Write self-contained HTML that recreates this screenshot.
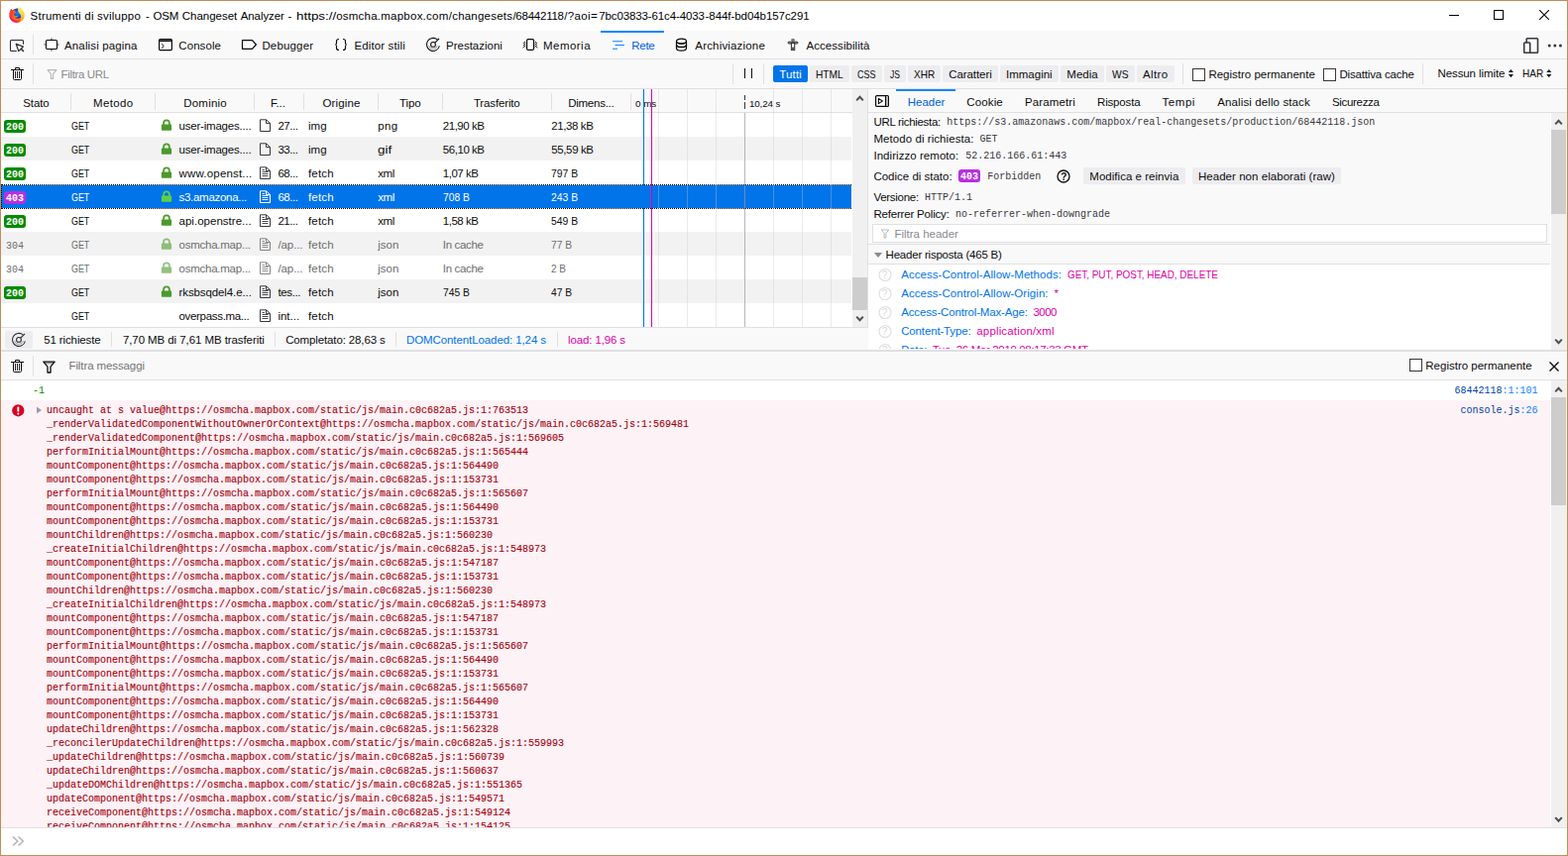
<!DOCTYPE html>
<html lang="it"><head><meta charset="utf-8"><title>Strumenti di sviluppo - OSM Changeset Analyzer</title>
<style>
html,body{margin:0;padding:0;background:#fff;}
body{width:1582px;height:864px;overflow:hidden;}
#win{position:relative;width:1582px;height:864px;overflow:hidden;background:#fff;font:11.5px/16px "Liberation Sans",sans-serif;color:#0c0c0d;}
.b{position:absolute;display:block;}
.t{position:absolute;white-space:pre;line-height:16px;transform-origin:0 50%;}
.m{font-family:"Liberation Mono",monospace;font-size:10px;}
.bd{background:#e0e0e2;}
.con{position:absolute;white-space:pre;font:10px/14px "Liberation Mono",monospace;margin:0;}

</style></head>
<body>
<div id="win">
<div class="b" style="left:0px;top:0px;width:1582px;height:31px;background:#fff;"></div>
<svg class="b" style="left:9px;top:7px;" width="16" height="16" viewBox="0 0 16 16">
<defs>
<linearGradient id="fa" x1="0.1" y1="0.9" x2="0.9" y2="0.1"><stop offset="0" stop-color="#d6139a"/><stop offset="0.22" stop-color="#ff2a3c"/><stop offset="0.5" stop-color="#ff7a1a"/><stop offset="0.78" stop-color="#ffc928"/><stop offset="1" stop-color="#fff45a"/></linearGradient>
<radialGradient id="fb" cx="0.55" cy="0.5" r="0.55"><stop offset="0" stop-color="#0a8cff"/><stop offset="0.55" stop-color="#0a58e8"/><stop offset="1" stop-color="#2a1fb8"/></radialGradient>
<linearGradient id="fc" x1="0.3" y1="0" x2="0.6" y2="1"><stop offset="0" stop-color="#fff45a"/><stop offset="0.55" stop-color="#ffd52e"/><stop offset="1" stop-color="#ff9a12"/></linearGradient>
<linearGradient id="fd" x1="0" y1="0.2" x2="1" y2="0.6"><stop offset="0" stop-color="#ff2a3c"/><stop offset="0.6" stop-color="#ff6a14"/><stop offset="1" stop-color="#ff9a12"/></linearGradient>
</defs>
<path d="M2.3 2C3 2.9 3.6 3.2 4.4 3.3C6 1.6 9 1.2 10.2 1.9C10.1 1.2 10.3 0.5 10.6 0.1C11.3 1.3 12.8 2 13.9 3.6C15.4 5.6 15.9 8.2 15.2 10.6C14.2 13.8 11.4 15.9 8 15.9C3.7 15.9 0.3 12.6 0.3 8.4C0.3 6 1 3.6 2.3 2Z" fill="url(#fa)"/>
<circle cx="8.2" cy="6.7" r="5.3" fill="url(#fb)"/>
<path d="M2.3 2C3 2.9 3.6 3.2 4.4 3.3C5 3.4 5.8 3.3 6.3 3.5C6.1 4.3 6.4 4.9 7.9 5.4C7.4 6 6.6 6.1 5.9 6.2C5.3 7 5.2 8.2 5.6 8.8C6.4 9.4 7.8 8.7 9.1 9C8.9 10 7.5 10.9 6 11C7 11.9 8.6 12.2 10.4 11.4C9.5 13 7.5 13.6 5.6 13C3.2 12.2 1.4 10.4 1.1 8C0.9 5.8 1.3 3.6 2.3 2Z" fill="url(#fd)"/>
<path d="M10.6 0.1C11.3 1.3 12.8 2 13.9 3.6C15.4 5.6 15.9 8.2 15.2 10.6C14.4 13.1 12.5 14.9 10.2 15.6C11.8 14.2 12.6 12.4 12.4 10.4C12.3 8.8 11.6 7.6 10.7 6.6C9.6 5.4 9 4.2 9.2 2.8C9.3 2.1 9.7 1.1 10.6 0.1Z" fill="url(#fc)"/>
</svg>
<span class="t" style="left:30.6px;top:8.01px;color:#000;letter-spacing:0.226px;">Strumenti di sviluppo</span>
<span class="t" style="left:147px;top:8.01px;color:#000;">-</span>
<span class="t" style="left:154.5px;top:8.01px;color:#000;letter-spacing:-0.168px;">OSM</span>
<span class="t" style="left:183.7px;top:8.01px;color:#000;">Changeset</span>
<span class="t" style="left:242.7px;top:8.01px;color:#000;letter-spacing:-0.069px;">Analyzer</span>
<span class="t" style="left:290.5px;top:8.01px;color:#000;letter-spacing:-0.444px;">-</span>
<span class="t" style="left:298.5px;top:8.01px;color:#000;transform:scaleX(1.1642);">https://</span>
<span class="t" style="left:339.2px;top:8.01px;color:#000;letter-spacing:0.235px;">osmcha.mapbox.com</span>
<span class="t" style="left:452.8px;top:8.01px;color:#000;letter-spacing:0.208px;">/changesets</span>
<span class="t" style="left:517.4px;top:8.01px;color:#000;letter-spacing:-0.235px;">/68442118</span>
<span class="t" style="left:569.2px;top:8.01px;color:#000;letter-spacing:0.357px;">/?aoi=</span>
<span class="t" style="left:604.2px;top:8.01px;color:#000;letter-spacing:-0.117px;">7bc03833-61c4-4033</span>
<span class="t" style="left:711.6px;top:8.01px;color:#000;letter-spacing:-0.064px;">-844f-bd04b157c291</span>
<div class="b" style="left:1462px;top:15px;width:10px;height:1px;background:#000;"></div>
<div class="b" style="left:1507px;top:10px;width:10px;height:10px;border:1px solid #000;box-sizing:border-box;"></div>
<svg class="b" style="left:1553px;top:10px;" width="10" height="10" viewBox="0 0 10 10"><path d="M0 0L10 10M10 0L0 10" stroke="#000" stroke-width="1.1" fill="none"/></svg>
<div class="b" style="left:0px;top:31px;width:1582px;height:28px;background:#f9f9fa;"></div>
<div class="b" style="left:0px;top:59px;width:1582px;height:1px;background:#e0e0e2;"></div>
<svg class="b" style="left:9px;top:39px;" width="17" height="15" viewBox="0 0 17 15"><path d="M14.5 5.7V2.5Q14.5 1.5 13.5 1.5H2.5Q1.5 1.5 1.5 2.5V11.5Q1.5 12.5 2.5 12.5H7.8" fill="none" stroke="#2a2a2e" stroke-width="1.05"/><path d="M7.2 5.2L14.4 8.1L9.8 12.6Z" fill="none" stroke="#2a2a2e" stroke-width="1.2" stroke-linejoin="round"/><path d="M12.3 10.2L14.9 12.9" stroke="#2a2a2e" stroke-width="1.5"/></svg>
<div class="b" style="left:33px;top:35px;width:1px;height:20px;background:#e0e0e2;"></div>
<svg class="b" style="left:44px;top:38px;" width="16" height="14" viewBox="0 0 16 14"><rect x="2.5" y="2.5" width="11" height="9" rx="1" fill="#fff" stroke="#0c0c0d" stroke-width="1.05"/><path d="M8 0.6V2M8 12V13.4M0.4 7H2M14 7H15.6" stroke="#0c0c0d" stroke-width="1.2" opacity="0.75"/></svg>
<span class="t" style="left:65px;top:38.01px;letter-spacing:0.142px;">Analisi pagina</span>
<svg class="b" style="left:159px;top:38px;" width="16" height="14" viewBox="0 0 16 14"><rect x="1.6" y="1.6" width="12.8" height="11" rx="1" fill="none" stroke="#0c0c0d" stroke-width="1.2"/><path d="M1.6 3.2H14.4" stroke="#0c0c0d" stroke-width="1.6"/><path d="M4 6.3L6.3 8.5L4 10.7" fill="none" stroke="#0c0c0d" stroke-width="1"/></svg>
<span class="t" style="left:180.3px;top:38.01px;letter-spacing:0.071px;">Console</span>
<svg class="b" style="left:243px;top:39px;" width="17" height="12" viewBox="0 0 17 12"><path d="M1.5 1.6H11.5L15.4 6L11.5 10.4H1.5Z" fill="none" stroke="#0c0c0d" stroke-width="1.2" stroke-linejoin="round"/></svg>
<span class="t" style="left:264.4px;top:38.01px;letter-spacing:0.161px;">Debugger</span>
<svg class="b" style="left:337px;top:38px;" width="14" height="14" viewBox="0 0 14 14"><path d="M5 1.5Q2.5 1.5 2.5 3.5V5.5Q2.5 7 1.2 7Q2.5 7 2.5 8.5V10.5Q2.5 12.5 5 12.5M9 1.5Q11.5 1.5 11.5 3.5V5.5Q11.5 7 12.8 7Q11.5 7 11.5 8.5V10.5Q11.5 12.5 9 12.5" fill="none" stroke="#0c0c0d" stroke-width="1.15"/></svg>
<span class="t" style="left:357.4px;top:38.01px;letter-spacing:0.137px;">Editor stili</span>
<svg class="b" style="left:429px;top:37px;" width="16" height="16" viewBox="0 0 16 16"><path d="M12.18 2.92A6.5 6.5 0 1 0 14.36 9.25" fill="none" stroke="#0c0c0d" stroke-width="1.05"/><circle cx="8" cy="7.9" r="2.4" fill="none" stroke="#0c0c0d" stroke-width="1.05"/><path d="M9.7 6.2L14 2" stroke="#0c0c0d" stroke-width="1.05"/><path d="M12.35 9.06A4.5 4.5 0 0 1 3.65 9.06" fill="none" stroke="#0c0c0d" stroke-width="0.7" opacity="0.55"/></svg>
<span class="t" style="left:450px;top:38.01px;">Prestazioni</span>
<svg class="b" style="left:526px;top:38px;" width="18" height="14" viewBox="0 0 18 14"><rect x="5.6" y="1.6" width="6.9" height="10.8" rx="1.2" fill="#fff" stroke="#0c0c0d" stroke-width="1.2"/><rect x="3" y="4" width="1" height="1" fill="#0c0c0d" opacity="1"/><rect x="3" y="6" width="1" height="1" fill="#0c0c0d" opacity="1"/><rect x="3" y="8" width="1" height="1" fill="#0c0c0d" opacity="1"/><rect x="2" y="5" width="1" height="1" fill="#0c0c0d" opacity="0.9"/><rect x="2" y="7" width="1" height="1" fill="#0c0c0d" opacity="0.9"/><rect x="2" y="9" width="1" height="1" fill="#0c0c0d" opacity="0.9"/><rect x="4" y="5" width="1" height="1" fill="#0c0c0d" opacity="0.35"/><rect x="4" y="7" width="1" height="1" fill="#0c0c0d" opacity="0.35"/><rect x="4" y="9" width="1" height="1" fill="#0c0c0d" opacity="0.35"/><rect x="1" y="10" width="1" height="1" fill="#0c0c0d" opacity="0.3"/><rect x="14" y="4" width="1" height="1" fill="#0c0c0d" opacity="1"/><rect x="14" y="6" width="1" height="1" fill="#0c0c0d" opacity="1"/><rect x="14" y="8" width="1" height="1" fill="#0c0c0d" opacity="1"/><rect x="15" y="5" width="1" height="1" fill="#0c0c0d" opacity="0.9"/><rect x="15" y="7" width="1" height="1" fill="#0c0c0d" opacity="0.9"/><rect x="15" y="9" width="1" height="1" fill="#0c0c0d" opacity="0.9"/><rect x="13" y="5" width="1" height="1" fill="#0c0c0d" opacity="0.35"/><rect x="13" y="7" width="1" height="1" fill="#0c0c0d" opacity="0.35"/><rect x="13" y="9" width="1" height="1" fill="#0c0c0d" opacity="0.35"/><rect x="16" y="10" width="1" height="1" fill="#0c0c0d" opacity="0.3"/></svg>
<span class="t" style="left:548px;top:38.01px;letter-spacing:0.467px;">Memoria</span>
<div class="b" style="left:606px;top:31px;width:64px;height:2px;background:#0a84ff;"></div>
<svg class="b" style="left:617px;top:40px;" width="15" height="11" viewBox="0 0 15 11"><path d="M1 1.8H11M3.5 5.5H13M1 9.2H6" stroke="#0a84ff" stroke-width="1.1"/></svg>
<span class="t" style="left:637.3px;top:38.01px;color:#0060df;letter-spacing:-0.299px;">Rete</span>
<svg class="b" style="left:681px;top:38px;" width="14" height="15" viewBox="0 0 14 15"><ellipse cx="6.5" cy="3.5" rx="5" ry="2.3" fill="#fff" stroke="#0c0c0d" stroke-width="1.2"/><path d="M1.5 3.5V10.6C1.5 12 3.7 13.2 6.5 13.2S11.5 12 11.5 10.6V3.5" fill="none" stroke="#0c0c0d" stroke-width="1.2"/><path d="M1.5 7C1.5 8.4 3.7 9.6 6.5 9.6S11.5 8.4 11.5 7" fill="none" stroke="#0c0c0d" stroke-width="1.5"/><path d="M2.2 5.2C3 6 4.6 6.5 6.5 6.5S10 6 10.8 5.2" fill="none" stroke="#0c0c0d" stroke-width="0.9"/></svg>
<span class="t" style="left:701.3px;top:38.01px;letter-spacing:0.176px;">Archiviazione</span>
<svg class="b" style="left:793px;top:38px;" width="14" height="14" viewBox="0 0 14 14"><rect x="5.2" y="1" width="3.7" height="2.9" rx="1.3" fill="#7a7a7d"/><rect x="2" y="4.2" width="10" height="1.8" rx="0.9" fill="#b1b1b3" stroke="#1a1a1c" stroke-width="0.9"/><rect x="5.4" y="5.6" width="3.3" height="7" fill="#fff" stroke="#2a2a2e" stroke-width="1"/><rect x="5.4" y="9.6" width="3.3" height="3" fill="#5a5a5e"/></svg>
<span class="t" style="left:813.4px;top:38.01px;letter-spacing:0.071px;">Accessibilità</span>
<svg class="b" style="left:1536px;top:37px;" width="17" height="18" viewBox="0 0 17 18"><rect x="4.2" y="1.7" width="11.3" height="14.6" rx="0.8" fill="#f9f9fa" stroke="#38383d" stroke-width="1.6"/><rect x="1.7" y="6" width="6" height="10.3" rx="0.8" fill="#f9f9fa" stroke="#38383d" stroke-width="1.6"/></svg>
<svg class="b" style="left:1561px;top:44px;" width="16" height="4" viewBox="0 0 16 4"><circle cx="2.2" cy="2" r="1.5" fill="#38383d"/><circle cx="7.8" cy="2" r="1.5" fill="#38383d"/><circle cx="13.4" cy="2" r="1.5" fill="#38383d"/></svg>
<div class="b" style="left:0px;top:60px;width:1582px;height:29px;background:#f9f9fa;"></div>
<div class="b" style="left:0px;top:89px;width:1582px;height:1px;background:#e0e0e2;"></div>
<svg class="b" style="left:11px;top:68px;" width="13" height="13" viewBox="0 0 13 13"><rect x="0" y="2" width="13" height="1" fill="#0c0c0d"/><path d="M4.5 2.5V0.5H8.5V2.5" fill="none" stroke="#0c0c0d" stroke-width="1"/><path d="M2.5 3V11.5Q2.5 12.5 3.5 12.5H9.5Q10.5 12.5 10.5 11.5V3" fill="none" stroke="#0c0c0d" stroke-width="1"/><path d="M4.5 4.4V10.6M6.5 4.4V10.6M8.5 4.4V10.6" stroke="#0c0c0d" stroke-width="0.9" stroke-linecap="round"/></svg>
<div class="b" style="left:33px;top:64px;width:1px;height:21px;background:#e0e0e2;"></div>
<svg class="b" style="left:47px;top:69px;" width="11" height="12" viewBox="0 0 11 12"><path d="M1 1.6H10L6.6 5.6V10.4H4.4V5.6Z" fill="none" stroke="#b8b8bb" stroke-width="1.1" stroke-linejoin="round"/></svg>
<span class="t" style="left:61.6px;top:67.01px;color:#8a8a90;letter-spacing:-0.357px;">Filtra URL</span>
<div class="b" style="left:739px;top:64px;width:1px;height:21px;background:#e0e0e2;"></div>
<div class="b" style="left:751px;top:69px;width:1.4px;height:10px;background:#0c0c0d;"></div>
<div class="b" style="left:758px;top:69px;width:1.4px;height:10px;background:#0c0c0d;"></div>
<div class="b" style="left:770px;top:64px;width:1px;height:21px;background:#e0e0e2;"></div>
<div class="b" style="left:780px;top:66px;width:35px;height:17px;background:#0074e8;border-radius:2px;"></div>
<span class="t" style="left:786.3px;top:67.01px;color:#fff;letter-spacing:0.149px;">Tutti</span>
<div class="b" style="left:817px;top:66px;width:40px;height:17px;background:#ededf0;border-radius:2px;"></div>
<span class="t" style="left:823px;top:67.01px;color:#0c0c0d;transform:scaleX(0.8878);">HTML</span>
<div class="b" style="left:859px;top:66px;width:31px;height:17px;background:#ededf0;border-radius:2px;"></div>
<span class="t" style="left:865.2px;top:67.01px;color:#0c0c0d;transform:scaleX(0.7820);">CSS</span>
<div class="b" style="left:892px;top:66px;width:22px;height:17px;background:#ededf0;border-radius:2px;"></div>
<span class="t" style="left:898px;top:67.01px;color:#0c0c0d;transform:scaleX(0.7451);">JS</span>
<div class="b" style="left:916px;top:66px;width:33px;height:17px;background:#ededf0;border-radius:2px;"></div>
<span class="t" style="left:921.8px;top:67.01px;color:#0c0c0d;transform:scaleX(0.8731);">XHR</span>
<div class="b" style="left:951px;top:66px;width:56px;height:17px;background:#ededf0;border-radius:2px;"></div>
<span class="t" style="left:957.2px;top:67.01px;color:#0c0c0d;letter-spacing:-0.068px;">Caratteri</span>
<div class="b" style="left:1009px;top:66px;width:59px;height:17px;background:#ededf0;border-radius:2px;"></div>
<span class="t" style="left:1015px;top:67.01px;color:#0c0c0d;">Immagini</span>
<div class="b" style="left:1070px;top:66px;width:44px;height:17px;background:#ededf0;border-radius:2px;"></div>
<span class="t" style="left:1076.3px;top:67.01px;color:#0c0c0d;">Media</span>
<div class="b" style="left:1116px;top:66px;width:29px;height:17px;background:#ededf0;border-radius:2px;"></div>
<span class="t" style="left:1122px;top:67.01px;color:#0c0c0d;transform:scaleX(0.8904);">WS</span>
<div class="b" style="left:1147px;top:66px;width:38px;height:17px;background:#ededf0;border-radius:2px;"></div>
<span class="t" style="left:1153px;top:67.01px;color:#0c0c0d;letter-spacing:0.369px;">Altro</span>
<div class="b" style="left:1193px;top:64px;width:1px;height:21px;background:#e0e0e2;"></div>
<div class="b" style="left:1203px;top:69px;width:13px;height:13px;background:#fff;border:1px solid #38383d;box-sizing:border-box;"></div>
<span class="t" style="left:1219.4px;top:67.01px;">Registro permanente</span>
<div class="b" style="left:1335px;top:69px;width:13px;height:13px;background:#fff;border:1px solid #38383d;box-sizing:border-box;"></div>
<span class="t" style="left:1351.4px;top:67.01px;letter-spacing:-0.172px;">Disattiva cache</span>
<div class="b" style="left:1435px;top:64px;width:1px;height:21px;background:#e0e0e2;"></div>
<span class="t" style="left:1450.5px;top:66.01px;letter-spacing:-0.095px;">Nessun limite</span>
<svg class="b" style="left:1521px;top:69px;" width="7" height="10" viewBox="0 0 7 10"><g transform="translate(0.6,0.5)"><path d="M0.2 3.6L2.8 0.4L5.4 3.6ZM0.2 5.6L2.8 8.8L5.4 5.6Z" fill="#1a1a1e"/></g></svg>
<span class="t" style="left:1535.5px;top:66.01px;transform:scaleX(0.8731);">HAR</span>
<svg class="b" style="left:1560px;top:69px;" width="7" height="10" viewBox="0 0 7 10"><g transform="translate(0,0.5)"><path d="M0.2 3.6L2.8 0.4L5.4 3.6ZM0.2 5.6L2.8 8.8L5.4 5.6Z" fill="#1a1a1e"/></g></svg>
<div class="b" style="left:0px;top:90px;width:876px;height:23px;background:#f9f9fa;"></div>
<div class="b" style="left:0px;top:113px;width:876px;height:1px;background:#e0e0e2;"></div>
<div class="b" style="left:71px;top:94px;width:1px;height:17px;background:#e0e0e2;"></div>
<div class="b" style="left:156px;top:94px;width:1px;height:17px;background:#e0e0e2;"></div>
<div class="b" style="left:256px;top:94px;width:1px;height:17px;background:#e0e0e2;"></div>
<div class="b" style="left:306px;top:94px;width:1px;height:17px;background:#e0e0e2;"></div>
<div class="b" style="left:381px;top:94px;width:1px;height:17px;background:#e0e0e2;"></div>
<div class="b" style="left:446px;top:94px;width:1px;height:17px;background:#e0e0e2;"></div>
<div class="b" style="left:556px;top:94px;width:1px;height:17px;background:#e0e0e2;"></div>
<div class="b" style="left:636px;top:94px;width:1px;height:17px;background:#e0e0e2;"></div>
<span class="t" style="left:23.3px;top:96.01px;letter-spacing:-0.112px;">Stato</span>
<span class="t" style="left:94px;top:96.01px;letter-spacing:0.357px;">Metodo</span>
<span class="t" style="left:185.3px;top:96.01px;letter-spacing:0.188px;">Dominio</span>
<span class="t" style="left:273px;top:96.01px;letter-spacing:-0.161px;">F...</span>
<span class="t" style="left:325.4px;top:96.01px;letter-spacing:0.160px;">Origine</span>
<span class="t" style="left:403px;top:96.01px;letter-spacing:-0.113px;">Tipo</span>
<span class="t" style="left:477.9px;top:96.01px;letter-spacing:-0.144px;">Trasferito</span>
<span class="t" style="left:573.2px;top:96.01px;letter-spacing:-0.253px;">Dimens...</span>
<span class="t" style="left:641px;top:96.6px;font-size:9.8px;">0 ms</span>
<span class="t" style="left:755.9px;top:96.6px;font-size:9.8px;letter-spacing:-0.120px;">10,24 s</span>
<div class="b" style="left:751px;top:96px;width:1px;height:5px;background:#38383d;"></div>
<div class="b" style="left:751px;top:103px;width:1px;height:7px;background:#38383d;"></div>
<div class="b" style="left:4px;top:121px;width:22px;height:13px;background:#058b00;border-radius:3px;"></div>
<span class="t m" style="left:6px;top:120.07px;color:#fff;font-size:11px;font-weight:bold;transform:scaleX(0.9085);">200</span>
<span class="t" style="left:71.7px;top:119.01px;color:#0c0c0d;transform:scaleX(0.7741);">GET</span>
<svg class="b" style="left:162px;top:120px;" width="12" height="13" viewBox="0 0 12 13"><g transform="translate(0.5,0)"><path d="M2.6 6V4.2A2.9 2.9 0 0 1 8.4 4.2V6" fill="none" stroke="#4c9a2a" stroke-width="1.7"/><rect x="0.4" y="5.6" width="10.2" height="6.2" rx="0.8" fill="#4c9a2a"/></g></svg>
<span class="t" style="left:180.5px;top:119.01px;color:#0c0c0d;letter-spacing:-0.204px;">user-images....</span>
<svg class="b" style="left:262px;top:120px;" width="11" height="13" viewBox="0 0 11 13"><path d="M0.5 0.8H6.6L10.5 4.5V12.5H0.5Z" fill="none" stroke="#38383d" stroke-width="1" stroke-linejoin="round"/><path d="M6.5 1V4.6H10.3" fill="none" stroke="#38383d" stroke-width="1"/></svg>
<span class="t" style="left:280.4px;top:119.01px;color:#0c0c0d;letter-spacing:-0.478px;">27...</span>
<span class="t" style="left:311px;top:119.01px;color:#0c0c0d;">img</span>
<span class="t" style="left:381.3px;top:119.01px;color:#0c0c0d;letter-spacing:0.371px;">png</span>
<span class="t" style="left:446.8px;top:119.01px;color:#0c0c0d;letter-spacing:-0.476px;">21,90 kB</span>
<span class="t" style="left:556.3px;top:119.01px;color:#0c0c0d;letter-spacing:-0.413px;">21,38 kB</span>
<div class="b" style="left:1px;top:138px;width:858px;height:24px;background:#f2f2f2;"></div>
<div class="b" style="left:4px;top:145px;width:22px;height:13px;background:#058b00;border-radius:3px;"></div>
<span class="t m" style="left:6px;top:144.07px;color:#fff;font-size:11px;font-weight:bold;transform:scaleX(0.9085);">200</span>
<span class="t" style="left:71.7px;top:143.01px;color:#0c0c0d;transform:scaleX(0.7741);">GET</span>
<svg class="b" style="left:162px;top:144px;" width="12" height="13" viewBox="0 0 12 13"><g transform="translate(0.5,0)"><path d="M2.6 6V4.2A2.9 2.9 0 0 1 8.4 4.2V6" fill="none" stroke="#4c9a2a" stroke-width="1.7"/><rect x="0.4" y="5.6" width="10.2" height="6.2" rx="0.8" fill="#4c9a2a"/></g></svg>
<span class="t" style="left:180.5px;top:143.01px;color:#0c0c0d;letter-spacing:-0.204px;">user-images....</span>
<svg class="b" style="left:262px;top:144px;" width="11" height="13" viewBox="0 0 11 13"><path d="M0.5 0.8H6.6L10.5 4.5V12.5H0.5Z" fill="none" stroke="#38383d" stroke-width="1" stroke-linejoin="round"/><path d="M6.5 1V4.6H10.3" fill="none" stroke="#38383d" stroke-width="1"/></svg>
<span class="t" style="left:280.4px;top:143.01px;color:#0c0c0d;letter-spacing:-0.478px;">33...</span>
<span class="t" style="left:311px;top:143.01px;color:#0c0c0d;">img</span>
<span class="t" style="left:381.3px;top:143.01px;color:#0c0c0d;transform:scaleX(1.1681);">gif</span>
<span class="t" style="left:446.8px;top:143.01px;color:#0c0c0d;letter-spacing:-0.451px;">56,10 kB</span>
<span class="t" style="left:556.3px;top:143.01px;color:#0c0c0d;letter-spacing:-0.388px;">55,59 kB</span>
<div class="b" style="left:4px;top:169px;width:22px;height:13px;background:#058b00;border-radius:3px;"></div>
<span class="t m" style="left:6px;top:168.07px;color:#fff;font-size:11px;font-weight:bold;transform:scaleX(0.9085);">200</span>
<span class="t" style="left:71.7px;top:167.01px;color:#0c0c0d;transform:scaleX(0.7741);">GET</span>
<svg class="b" style="left:162px;top:168px;" width="12" height="13" viewBox="0 0 12 13"><g transform="translate(0.5,0)"><path d="M2.6 6V4.2A2.9 2.9 0 0 1 8.4 4.2V6" fill="none" stroke="#4c9a2a" stroke-width="1.7"/><rect x="0.4" y="5.6" width="10.2" height="6.2" rx="0.8" fill="#4c9a2a"/></g></svg>
<span class="t" style="left:180.5px;top:167.01px;color:#0c0c0d;letter-spacing:0.185px;">www.openst...</span>
<svg class="b" style="left:262px;top:168px;" width="11" height="13" viewBox="0 0 11 13"><path d="M0.5 0.8H6.6L10.5 4.5V12.5H0.5Z" fill="none" stroke="#38383d" stroke-width="1" stroke-linejoin="round"/><path d="M6.5 1V4.6H10.3" fill="none" stroke="#38383d" stroke-width="1"/><path d="M2.5 3.5H5M2.5 5.5H8.5M2.5 7.5H8.5M2.5 9.5H8.5" stroke="#38383d" stroke-width="0.9"/></svg>
<span class="t" style="left:280.4px;top:167.01px;color:#0c0c0d;letter-spacing:-0.478px;">68...</span>
<span class="t" style="left:311px;top:167.01px;color:#0c0c0d;letter-spacing:0.152px;">fetch</span>
<span class="t" style="left:381.3px;top:167.01px;color:#0c0c0d;letter-spacing:-0.430px;">xml</span>
<span class="t" style="left:446.8px;top:167.01px;color:#0c0c0d;letter-spacing:-0.471px;">1,07 kB</span>
<span class="t" style="left:556.3px;top:167.01px;color:#0c0c0d;transform:scaleX(0.9048);">797 B</span>
<div class="b" style="left:1px;top:187px;width:858px;height:23px;background:#0074e8;"></div>
<div class="b" style="left:1px;top:186px;width:858px;height:1px;border-top:1px dotted #000;height:0;"></div>
<div class="b" style="left:1px;top:210px;width:858px;height:1px;border-top:1px dotted #000;height:0;"></div>
<div class="b" style="left:1px;top:186px;width:1px;height:25px;border-left:1px dotted #000;width:0;"></div>
<div class="b" style="left:4px;top:193px;width:22px;height:13px;background:#b82ee5;border-radius:3px;"></div>
<span class="t m" style="left:6px;top:192.07px;color:#fff;font-size:11px;font-weight:bold;transform:scaleX(0.9085);">403</span>
<span class="t" style="left:71.7px;top:191.01px;color:#fff;transform:scaleX(0.7741);">GET</span>
<svg class="b" style="left:162px;top:192px;" width="12" height="13" viewBox="0 0 12 13"><g transform="translate(0.5,0)"><path d="M2.6 6V4.2A2.9 2.9 0 0 1 8.4 4.2V6" fill="none" stroke="#5fd044" stroke-width="1.7"/><rect x="0.4" y="5.6" width="10.2" height="6.2" rx="0.8" fill="#5fd044"/></g></svg>
<span class="t" style="left:180.5px;top:191.01px;color:#fff;letter-spacing:-0.287px;">s3.amazona...</span>
<svg class="b" style="left:262px;top:192px;" width="11" height="13" viewBox="0 0 11 13"><path d="M0.5 0.8H6.6L10.5 4.5V12.5H0.5Z" fill="none" stroke="#fff" stroke-width="1" stroke-linejoin="round"/><path d="M6.5 1V4.6H10.3" fill="none" stroke="#fff" stroke-width="1"/><path d="M2.5 3.5H5M2.5 5.5H8.5M2.5 7.5H8.5M2.5 9.5H8.5" stroke="#fff" stroke-width="0.9"/></svg>
<span class="t" style="left:280.4px;top:191.01px;color:#fff;letter-spacing:-0.478px;">68...</span>
<span class="t" style="left:311px;top:191.01px;color:#fff;letter-spacing:0.152px;">fetch</span>
<span class="t" style="left:381.3px;top:191.01px;color:#fff;letter-spacing:-0.430px;">xml</span>
<span class="t" style="left:446.8px;top:191.01px;color:#fff;transform:scaleX(0.8981);">708 B</span>
<span class="t" style="left:556.3px;top:191.01px;color:#fff;transform:scaleX(0.9048);">243 B</span>
<div class="b" style="left:4px;top:217px;width:22px;height:13px;background:#058b00;border-radius:3px;"></div>
<span class="t m" style="left:6px;top:216.07px;color:#fff;font-size:11px;font-weight:bold;transform:scaleX(0.9085);">200</span>
<span class="t" style="left:71.7px;top:215.01px;color:#0c0c0d;transform:scaleX(0.7741);">GET</span>
<svg class="b" style="left:162px;top:216px;" width="12" height="13" viewBox="0 0 12 13"><g transform="translate(0.5,0)"><path d="M2.6 6V4.2A2.9 2.9 0 0 1 8.4 4.2V6" fill="none" stroke="#4c9a2a" stroke-width="1.7"/><rect x="0.4" y="5.6" width="10.2" height="6.2" rx="0.8" fill="#4c9a2a"/></g></svg>
<span class="t" style="left:180.5px;top:215.01px;color:#0c0c0d;letter-spacing:0.027px;">api.openstre...</span>
<svg class="b" style="left:262px;top:216px;" width="11" height="13" viewBox="0 0 11 13"><path d="M0.5 0.8H6.6L10.5 4.5V12.5H0.5Z" fill="none" stroke="#38383d" stroke-width="1" stroke-linejoin="round"/><path d="M6.5 1V4.6H10.3" fill="none" stroke="#38383d" stroke-width="1"/><path d="M2.5 3.5H5M2.5 5.5H8.5M2.5 7.5H8.5M2.5 9.5H8.5" stroke="#38383d" stroke-width="0.9"/></svg>
<span class="t" style="left:280.4px;top:215.01px;color:#0c0c0d;letter-spacing:-0.478px;">21...</span>
<span class="t" style="left:311px;top:215.01px;color:#0c0c0d;letter-spacing:0.152px;">fetch</span>
<span class="t" style="left:381.3px;top:215.01px;color:#0c0c0d;letter-spacing:-0.430px;">xml</span>
<span class="t" style="left:446.8px;top:215.01px;color:#0c0c0d;letter-spacing:-0.471px;">1,58 kB</span>
<span class="t" style="left:556.3px;top:215.01px;color:#0c0c0d;transform:scaleX(0.9048);">549 B</span>
<div class="b" style="left:1px;top:234px;width:858px;height:24px;background:#f2f2f2;"></div>
<span class="t m" style="left:6px;top:240.07px;color:#6d6d6e;font-size:11px;transform:scaleX(0.9085);">304</span>
<span class="t" style="left:71.7px;top:239.01px;color:#6d6d6e;transform:scaleX(0.7741);">GET</span>
<svg class="b" style="left:162px;top:240px;opacity:0.6;" width="12" height="13" viewBox="0 0 12 13"><g transform="translate(0.5,0)"><path d="M2.6 6V4.2A2.9 2.9 0 0 1 8.4 4.2V6" fill="none" stroke="#4c9a2a" stroke-width="1.7"/><rect x="0.4" y="5.6" width="10.2" height="6.2" rx="0.8" fill="#4c9a2a"/></g></svg>
<span class="t" style="left:180.5px;top:239.01px;color:#6d6d6e;letter-spacing:-0.240px;">osmcha.map...</span>
<svg class="b" style="left:262px;top:240px;opacity:0.6;" width="11" height="13" viewBox="0 0 11 13"><path d="M0.5 0.8H6.6L10.5 4.5V12.5H0.5Z" fill="none" stroke="#38383d" stroke-width="1" stroke-linejoin="round"/><path d="M6.5 1V4.6H10.3" fill="none" stroke="#38383d" stroke-width="1"/><path d="M2.5 3.5H5M2.5 5.5H8.5M2.5 7.5H8.5M2.5 9.5H8.5" stroke="#38383d" stroke-width="0.9"/></svg>
<span class="t" style="left:280.4px;top:239.01px;color:#6d6d6e;letter-spacing:-0.080px;">/ap...</span>
<span class="t" style="left:311px;top:239.01px;color:#6d6d6e;letter-spacing:0.152px;">fetch</span>
<span class="t" style="left:381.3px;top:239.01px;color:#6d6d6e;">json</span>
<span class="t" style="left:446.8px;top:239.01px;color:#6d6d6e;letter-spacing:-0.348px;">In cache</span>
<span class="t" style="left:556.3px;top:239.01px;color:#6d6d6e;transform:scaleX(0.8956);">77 B</span>
<span class="t m" style="left:6px;top:264.07px;color:#6d6d6e;font-size:11px;transform:scaleX(0.9085);">304</span>
<span class="t" style="left:71.7px;top:263.01px;color:#6d6d6e;transform:scaleX(0.7741);">GET</span>
<svg class="b" style="left:162px;top:264px;opacity:0.6;" width="12" height="13" viewBox="0 0 12 13"><g transform="translate(0.5,0)"><path d="M2.6 6V4.2A2.9 2.9 0 0 1 8.4 4.2V6" fill="none" stroke="#4c9a2a" stroke-width="1.7"/><rect x="0.4" y="5.6" width="10.2" height="6.2" rx="0.8" fill="#4c9a2a"/></g></svg>
<span class="t" style="left:180.5px;top:263.01px;color:#6d6d6e;letter-spacing:-0.240px;">osmcha.map...</span>
<svg class="b" style="left:262px;top:264px;opacity:0.6;" width="11" height="13" viewBox="0 0 11 13"><path d="M0.5 0.8H6.6L10.5 4.5V12.5H0.5Z" fill="none" stroke="#38383d" stroke-width="1" stroke-linejoin="round"/><path d="M6.5 1V4.6H10.3" fill="none" stroke="#38383d" stroke-width="1"/><path d="M2.5 3.5H5M2.5 5.5H8.5M2.5 7.5H8.5M2.5 9.5H8.5" stroke="#38383d" stroke-width="0.9"/></svg>
<span class="t" style="left:280.4px;top:263.01px;color:#6d6d6e;letter-spacing:-0.080px;">/ap...</span>
<span class="t" style="left:311px;top:263.01px;color:#6d6d6e;letter-spacing:0.152px;">fetch</span>
<span class="t" style="left:381.3px;top:263.01px;color:#6d6d6e;">json</span>
<span class="t" style="left:446.8px;top:263.01px;color:#6d6d6e;letter-spacing:-0.348px;">In cache</span>
<span class="t" style="left:556.3px;top:263.01px;color:#6d6d6e;transform:scaleX(0.8688);">2 B</span>
<div class="b" style="left:1px;top:282px;width:858px;height:24px;background:#f2f2f2;"></div>
<div class="b" style="left:4px;top:289px;width:22px;height:13px;background:#058b00;border-radius:3px;"></div>
<span class="t m" style="left:6px;top:288.07px;color:#fff;font-size:11px;font-weight:bold;transform:scaleX(0.9085);">200</span>
<span class="t" style="left:71.7px;top:287.01px;color:#0c0c0d;transform:scaleX(0.7741);">GET</span>
<svg class="b" style="left:162px;top:288px;" width="12" height="13" viewBox="0 0 12 13"><g transform="translate(0.5,0)"><path d="M2.6 6V4.2A2.9 2.9 0 0 1 8.4 4.2V6" fill="none" stroke="#4c9a2a" stroke-width="1.7"/><rect x="0.4" y="5.6" width="10.2" height="6.2" rx="0.8" fill="#4c9a2a"/></g></svg>
<span class="t" style="left:180.5px;top:287.01px;color:#0c0c0d;letter-spacing:-0.100px;">rksbsqdel4.e...</span>
<svg class="b" style="left:262px;top:288px;" width="11" height="13" viewBox="0 0 11 13"><path d="M0.5 0.8H6.6L10.5 4.5V12.5H0.5Z" fill="none" stroke="#38383d" stroke-width="1" stroke-linejoin="round"/><path d="M6.5 1V4.6H10.3" fill="none" stroke="#38383d" stroke-width="1"/><path d="M2.5 3.5H5M2.5 5.5H8.5M2.5 7.5H8.5M2.5 9.5H8.5" stroke="#38383d" stroke-width="0.9"/></svg>
<span class="t" style="left:280.4px;top:287.01px;color:#0c0c0d;letter-spacing:-0.356px;">tes...</span>
<span class="t" style="left:311px;top:287.01px;color:#0c0c0d;letter-spacing:0.152px;">fetch</span>
<span class="t" style="left:381.3px;top:287.01px;color:#0c0c0d;">json</span>
<span class="t" style="left:446.8px;top:287.01px;color:#0c0c0d;transform:scaleX(0.8981);">745 B</span>
<span class="t" style="left:556.3px;top:287.01px;color:#0c0c0d;transform:scaleX(0.8956);">47 B</span>
<span class="t" style="left:71.7px;top:311.01px;color:#0c0c0d;transform:scaleX(0.7741);">GET</span>
<span class="t" style="left:180.5px;top:311.01px;color:#0c0c0d;letter-spacing:-0.316px;">overpass.ma...</span>
<svg class="b" style="left:262px;top:312px;" width="11" height="13" viewBox="0 0 11 13"><path d="M0.5 0.8H6.6L10.5 4.5V12.5H0.5Z" fill="none" stroke="#38383d" stroke-width="1" stroke-linejoin="round"/><path d="M6.5 1V4.6H10.3" fill="none" stroke="#38383d" stroke-width="1"/><path d="M2.5 3.5H5M2.5 5.5H8.5M2.5 7.5H8.5M2.5 9.5H8.5" stroke="#38383d" stroke-width="0.9"/></svg>
<span class="t" style="left:280.4px;top:311.01px;color:#0c0c0d;">int...</span>
<span class="t" style="left:311px;top:311.01px;color:#0c0c0d;letter-spacing:0.152px;">fetch</span>
<div class="b" style="left:664px;top:90px;width:1px;height:240px;background:rgba(198,200,212,0.36);"></div>
<div class="b" style="left:693px;top:90px;width:1px;height:240px;background:rgba(198,200,212,0.36);"></div>
<div class="b" style="left:722px;top:90px;width:1px;height:240px;background:rgba(198,200,212,0.36);"></div>
<div class="b" style="left:751px;top:114px;width:1px;height:216px;background:rgba(150,152,166,0.7);"></div>
<div class="b" style="left:780px;top:90px;width:1px;height:240px;background:rgba(198,200,212,0.36);"></div>
<div class="b" style="left:809px;top:90px;width:1px;height:240px;background:rgba(198,200,212,0.36);"></div>
<div class="b" style="left:838px;top:90px;width:1px;height:240px;background:rgba(198,200,212,0.36);"></div>
<div class="b" style="left:649px;top:90px;width:1px;height:240px;background:#0074e8;"></div>
<div class="b" style="left:657px;top:90px;width:1px;height:240px;background:#dd00a9;"></div>
<div class="b" style="left:859px;top:114px;width:1px;height:216px;background:#fff;"></div>
<div class="b" style="left:860px;top:90px;width:15px;height:240px;background:#f0f0f0;"></div>
<div class="b" style="left:860px;top:280px;width:15px;height:33px;background:#cdcdcd;"></div>
<svg class="b" style="left:863px;top:95px;" width="9" height="8" viewBox="0 0 9 8"><g transform="translate(0.5,0.5)"><path d="M0.7 5.9L4 2.4L7.3 5.9" fill="none" stroke="#505050" stroke-width="2.1"/></g></svg>
<svg class="b" style="left:863px;top:318px;" width="9" height="8" viewBox="0 0 9 8"><g transform="translate(0.5,0.5)"><path d="M0.7 1.1L4 4.6L7.3 1.1" fill="none" stroke="#505050" stroke-width="2.1"/></g></svg>
<div class="b" style="left:875px;top:90px;width:1px;height:263px;background:#e0e0e2;"></div>
<div class="b" style="left:0px;top:330px;width:876px;height:1px;background:#e0e0e2;"></div>
<div class="b" style="left:0px;top:331px;width:876px;height:22px;background:#f9f9fa;"></div>
<div class="b" style="left:5px;top:334px;width:28px;height:18px;background:#ededf0;border-radius:2px;"></div>
<svg class="b" style="left:11px;top:335px;" width="16" height="16" viewBox="0 0 16 16"><path d="M12.18 2.92A6.5 6.5 0 1 0 14.36 9.25" fill="none" stroke="#2a2a2e" stroke-width="1.05"/><circle cx="8" cy="7.9" r="2.4" fill="none" stroke="#2a2a2e" stroke-width="1.05"/><path d="M9.7 6.2L14 2" stroke="#2a2a2e" stroke-width="1.05"/><path d="M12.35 9.06A4.5 4.5 0 0 1 3.65 9.06" fill="none" stroke="#2a2a2e" stroke-width="0.7" opacity="0.55"/></svg>
<span class="t" style="left:44.2px;top:335.01px;letter-spacing:-0.118px;">51 richieste</span>
<div class="b" style="left:112px;top:335px;width:1px;height:15px;background:#e0e0e2;"></div>
<span class="t" style="left:123.9px;top:335.01px;letter-spacing:-0.076px;">7,70 MB di 7,61 MB trasferiti</span>
<div class="b" style="left:277px;top:335px;width:1px;height:15px;background:#e0e0e2;"></div>
<span class="t" style="left:288.2px;top:335.01px;letter-spacing:-0.133px;">Completato: 28,63 s</span>
<div class="b" style="left:399px;top:335px;width:1px;height:15px;background:#e0e0e2;"></div>
<span class="t" style="left:410px;top:335.01px;color:#0074e8;letter-spacing:-0.092px;">DOMContentLoaded: 1,24 s</span>
<div class="b" style="left:562px;top:335px;width:1px;height:15px;background:#e0e0e2;"></div>
<span class="t" style="left:573px;top:335.01px;color:#dd00a9;letter-spacing:-0.122px;">load: 1,96 s</span>
<div class="b" style="left:876px;top:90px;width:705px;height:23px;background:#f9f9fa;"></div>
<div class="b" style="left:876px;top:113px;width:705px;height:1px;background:#e0e0e2;"></div>
<svg class="b" style="left:883px;top:96px;" width="14" height="12" viewBox="0 0 14 12"><rect x="0.6" y="0.6" width="12.8" height="10.8" rx="1" fill="#fff" stroke="#0c0c0d" stroke-width="1.2"/><rect x="10.5" y="1.2" width="2.4" height="9.6" fill="#b1b1b3"/><path d="M10.5 1V11" stroke="#0c0c0d" stroke-width="1"/><path d="M3.4 3.4L7.4 6L3.4 8.6Z" fill="none" stroke="#0c0c0d" stroke-width="1.1" stroke-linejoin="round"/></svg>
<div class="b" style="left:904px;top:90px;width:60px;height:2px;background:#0a84ff;"></div>
<span class="t" style="left:915.7px;top:95.01px;color:#0060df;">Header</span>
<span class="t" style="left:975.2px;top:95.01px;color:#0c0c0d;letter-spacing:0.148px;">Cookie</span>
<span class="t" style="left:1034px;top:95.01px;color:#0c0c0d;letter-spacing:0.127px;">Parametri</span>
<span class="t" style="left:1107px;top:95.01px;color:#0c0c0d;letter-spacing:-0.169px;">Risposta</span>
<span class="t" style="left:1172.5px;top:95.01px;color:#0c0c0d;letter-spacing:0.562px;">Tempi</span>
<span class="t" style="left:1228.3px;top:95.01px;color:#0c0c0d;letter-spacing:0.110px;">Analisi dello stack</span>
<span class="t" style="left:1344px;top:95.01px;color:#0c0c0d;letter-spacing:-0.322px;">Sicurezza</span>
<div class="b" style="left:876px;top:114px;width:688px;height:133px;background:#f9f9fa;"></div>
<div class="b" style="left:876px;top:247px;width:688px;height:19px;background:#f9f9fa;"></div>
<div class="b" style="left:876px;top:267px;width:688px;height:85px;background:#fff;"></div>
<span class="t" style="left:881.4px;top:115.01px;letter-spacing:-0.307px;">URL richiesta:</span>
<span class="t m" style="left:955.3px;top:116.33px;color:#38383d;">https://s3.amazonaws.com/mapbox/real-changesets/production/68442118.json</span>
<span class="t" style="left:881.4px;top:132.01px;letter-spacing:0.069px;">Metodo di richiesta:</span>
<span class="t m" style="left:988.6px;top:133.33px;color:#38383d;">GET</span>
<span class="t" style="left:881.4px;top:149.01px;letter-spacing:0.052px;">Indirizzo remoto:</span>
<span class="t m" style="left:974.2px;top:150.33px;color:#38383d;">52.216.166.61:443</span>
<span class="t" style="left:881.4px;top:170.01px;">Codice di stato:</span>
<span class="t" style="left:881.4px;top:191.01px;letter-spacing:-0.273px;">Versione:</span>
<span class="t m" style="left:933px;top:192.33px;color:#38383d;">HTTP/1.1</span>
<span class="t" style="left:881.4px;top:208.01px;letter-spacing:-0.184px;">Referrer Policy:</span>
<span class="t m" style="left:964px;top:209.33px;color:#38383d;">no-referrer-when-downgrade</span>
<div class="b" style="left:967px;top:171px;width:22px;height:13px;background:#b82ee5;border-radius:3px;"></div>
<span class="t m" style="left:969px;top:170.07px;color:#fff;font-size:11px;font-weight:bold;transform:scaleX(0.9085);">403</span>
<span class="t m" style="left:996.2px;top:171.33px;color:#38383d;">Forbidden</span>
<svg class="b" style="left:1066px;top:171px;" width="14" height="14" viewBox="0 0 14 14"><circle cx="7" cy="7" r="6" fill="none" stroke="#0c0c0d" stroke-width="1.3"/></svg>
<span class="t" style="left:1070.2px;top:170.53px;font-size:10px;font-weight:bold;">?</span>
<div class="b" style="left:1093px;top:169px;width:103px;height:17px;background:#ededf0;border-radius:2px;"></div>
<span class="t" style="left:1099.3px;top:170.01px;letter-spacing:0.029px;">Modifica e reinvia</span>
<div class="b" style="left:1203px;top:169px;width:150px;height:17px;background:#ededf0;border-radius:2px;"></div>
<span class="t" style="left:1208.9px;top:170.01px;letter-spacing:0.050px;">Header non elaborati (raw)</span>
<div class="b" style="left:880px;top:226px;width:681px;height:19px;background:#fff;border:1px solid #e0e0e2;box-sizing:border-box;"></div>
<svg class="b" style="left:888px;top:231px;" width="10" height="11" viewBox="0 0 10 11"><g transform="translate(0.5,0)"><path d="M0.7 1H8.3L5.4 4.4V9H3.6V4.4Z" fill="none" stroke="#b8b8bb" stroke-width="1" stroke-linejoin="round"/></g></svg>
<span class="t" style="left:902.4px;top:228.01px;color:#8a8a90;">Filtra header</span>
<div class="b" style="left:876px;top:246px;width:688px;height:1px;background:#e0e0e2;"></div>
<div class="b" style="left:876px;top:266px;width:688px;height:1px;background:#e0e0e2;"></div>
<svg class="b" style="left:881px;top:254px;" width="10" height="7" viewBox="0 0 10 7"><g transform="translate(0.5,0.5)"><path d="M0.4 0.5H8.6L4.5 5.5Z" fill="#8a8a8f"/></g></svg>
<span class="t" style="left:893.6px;top:249.01px;letter-spacing:-0.221px;">Header risposta (465 B)</span>
<div class="b" style="left:876px;top:267px;width:688px;height:85px;overflow:hidden;"><svg class="b" style="left:10px;top:3px;" width="15" height="15" viewBox="0 0 15 15"><g transform="translate(0,0.5)"><circle cx="7" cy="7" r="6" fill="none" stroke="#dedee2" stroke-width="1.1"/></g></svg><span class="t" style="left:13.799999999999955px;top:3.13px;color:#d8d8dc;font-size:10px;">?</span><span class="t" style="left:33.200000000000045px;top:2.01px;color:#0074e8;letter-spacing:0.048px;">Access-Control-Allow-Methods:</span><span class="t" style="left:200.5999999999999px;top:2.01px;color:#dd00a9;transform:scaleX(0.8612);">GET, PUT, POST, HEAD, DELETE</span><svg class="b" style="left:10px;top:22px;" width="15" height="15" viewBox="0 0 15 15"><g transform="translate(0,0.5)"><circle cx="7" cy="7" r="6" fill="none" stroke="#dedee2" stroke-width="1.1"/></g></svg><span class="t" style="left:13.799999999999955px;top:22.13px;color:#d8d8dc;font-size:10px;">?</span><span class="t" style="left:33.200000000000045px;top:21.01px;color:#0074e8;letter-spacing:0.051px;">Access-Control-Allow-Origin:</span><span class="t" style="left:187.4000000000001px;top:21.01px;color:#dd00a9;">*</span><svg class="b" style="left:10px;top:41px;" width="15" height="15" viewBox="0 0 15 15"><g transform="translate(0,0.5)"><circle cx="7" cy="7" r="6" fill="none" stroke="#dedee2" stroke-width="1.1"/></g></svg><span class="t" style="left:13.799999999999955px;top:41.13px;color:#d8d8dc;font-size:10px;">?</span><span class="t" style="left:33.200000000000045px;top:40.01px;color:#0074e8;letter-spacing:-0.144px;">Access-Control-Max-Age:</span><span class="t" style="left:166.4000000000001px;top:40.01px;color:#dd00a9;letter-spacing:-0.498px;">3000</span><svg class="b" style="left:10px;top:60px;" width="15" height="15" viewBox="0 0 15 15"><g transform="translate(0,0.5)"><circle cx="7" cy="7" r="6" fill="none" stroke="#dedee2" stroke-width="1.1"/></g></svg><span class="t" style="left:13.799999999999955px;top:60.13px;color:#d8d8dc;font-size:10px;">?</span><span class="t" style="left:33.200000000000045px;top:59.01px;color:#0074e8;letter-spacing:-0.149px;">Content-Type:</span><span class="t" style="left:109.29999999999995px;top:59.01px;color:#dd00a9;letter-spacing:0.155px;">application/xml</span><svg class="b" style="left:10px;top:79px;" width="15" height="15" viewBox="0 0 15 15"><g transform="translate(0,0.5)"><circle cx="7" cy="7" r="6" fill="none" stroke="#dedee2" stroke-width="1.1"/></g></svg><span class="t" style="left:13.799999999999955px;top:79.13px;color:#d8d8dc;font-size:10px;">?</span><span class="t" style="left:33.200000000000045px;top:78.01px;color:#0074e8;letter-spacing:-0.300px;">Date:</span><span class="t" style="left:64.79999999999995px;top:78.01px;color:#dd00a9;letter-spacing:-0.354px;">Tue, 26 Mar 2019 08:17:33 GMT</span></div>
<div class="b" style="left:1564px;top:114px;width:1px;height:239px;background:#fff;"></div>
<div class="b" style="left:1565px;top:114px;width:16px;height:239px;background:#f0f0f0;"></div>
<div class="b" style="left:1565px;top:131px;width:15px;height:85px;background:#cdcdcd;"></div>
<svg class="b" style="left:1568px;top:119px;" width="9" height="8" viewBox="0 0 9 8"><g transform="translate(0.5,0.5)"><path d="M0.7 5.9L4 2.4L7.3 5.9" fill="none" stroke="#505050" stroke-width="2.1"/></g></svg>
<svg class="b" style="left:1568px;top:341px;" width="9" height="8" viewBox="0 0 9 8"><g transform="translate(0.5,0.5)"><path d="M0.7 1.1L4 4.6L7.3 1.1" fill="none" stroke="#505050" stroke-width="2.1"/></g></svg>
<div class="b" style="left:0px;top:353px;width:1582px;height:2px;background:#e0e0e2;"></div>
<div class="b" style="left:0px;top:355px;width:1582px;height:28px;background:#f9f9fa;"></div>
<div class="b" style="left:0px;top:383px;width:1582px;height:1px;background:#e0e0e2;"></div>
<svg class="b" style="left:11px;top:363px;" width="13" height="13" viewBox="0 0 13 13"><rect x="0" y="2" width="13" height="1" fill="#0c0c0d"/><path d="M4.5 2.5V0.5H8.5V2.5" fill="none" stroke="#0c0c0d" stroke-width="1"/><path d="M2.5 3V11.5Q2.5 12.5 3.5 12.5H9.5Q10.5 12.5 10.5 11.5V3" fill="none" stroke="#0c0c0d" stroke-width="1"/><path d="M4.5 4.4V10.6M6.5 4.4V10.6M8.5 4.4V10.6" stroke="#0c0c0d" stroke-width="0.9" stroke-linecap="round"/></svg>
<div class="b" style="left:33px;top:359px;width:1px;height:21px;background:#e0e0e2;"></div>
<svg class="b" style="left:43px;top:364px;" width="13" height="13" viewBox="0 0 13 13"><path d="M0.8 1.2H12.2L8 6.2V12H5V6.2Z" fill="none" stroke="#0c0c0d" stroke-width="1.3" stroke-linejoin="round"/><path d="M1.2 1.6H11.8L10.4 3.4H2.6Z" fill="#0c0c0d" opacity="0.35"/></svg>
<span class="t" style="left:69.5px;top:361.01px;color:#737373;letter-spacing:-0.105px;">Filtra messaggi</span>
<div class="b" style="left:1422px;top:362px;width:13px;height:13px;background:#fff;border:1px solid #38383d;box-sizing:border-box;"></div>
<span class="t" style="left:1438.3px;top:361.01px;">Registro permanente</span>
<svg class="b" style="left:1563px;top:365px;" width="10" height="10" viewBox="0 0 10 10"><path d="M0.5 0.5L9.5 9.5M9.5 0.5L0.5 9.5" stroke="#0c0c0d" stroke-width="1.4" fill="none"/></svg>
<div class="b" style="left:0px;top:384px;width:1564px;height:20px;background:#fff;"></div>
<span class="t m" style="left:33px;top:387.33px;color:#058b00;">-1</span>
<span class="t m" style="left:1467.6px;top:387.33px;color:#003eaa;">68442118</span>
<span class="t m" style="left:1515.6px;top:387.33px;color:#0a84ff;">:1:101</span>
<div class="b" style="left:0px;top:404px;width:1564px;height:431px;background:#fdf2f5;"></div>
<svg class="b" style="left:12px;top:408px;" width="13" height="13" viewBox="0 0 13 13"><circle cx="6.3" cy="6.3" r="6.1" fill="#d70022"/><rect x="5.4" y="2.6" width="1.9" height="5" rx="0.6" fill="#fff"/><circle cx="6.35" cy="9.6" r="1.05" fill="#fff"/></svg>
<svg class="b" style="left:36px;top:410px;" width="7" height="9" viewBox="0 0 7 9"><g transform="translate(0.5,0)"><path d="M0.5 0.5L5.5 4L0.5 7.5Z" fill="#9c9ca0"/></g></svg>
<span class="t m" style="left:1473.6px;top:407.33px;color:#003eaa;">console.js</span>
<span class="t m" style="left:1533.6px;top:407.33px;color:#0a84ff;">:26</span>
<div class="b" style="left:0;top:404px;width:1564px;height:431px;overflow:hidden;"><pre class="con" style="left:47px;top:4px;color:#a4000f;-webkit-text-stroke:0.12px #a4000f;">uncaught at s value@https://osmcha.mapbox.com/static/js/main.c0c682a5.js:1:763513
_renderValidatedComponentWithoutOwnerOrContext@https://osmcha.mapbox.com/static/js/main.c0c682a5.js:1:569481
_renderValidatedComponent@https://osmcha.mapbox.com/static/js/main.c0c682a5.js:1:569605
performInitialMount@https://osmcha.mapbox.com/static/js/main.c0c682a5.js:1:565444
mountComponent@https://osmcha.mapbox.com/static/js/main.c0c682a5.js:1:564490
mountComponent@https://osmcha.mapbox.com/static/js/main.c0c682a5.js:1:153731
performInitialMount@https://osmcha.mapbox.com/static/js/main.c0c682a5.js:1:565607
mountComponent@https://osmcha.mapbox.com/static/js/main.c0c682a5.js:1:564490
mountComponent@https://osmcha.mapbox.com/static/js/main.c0c682a5.js:1:153731
mountChildren@https://osmcha.mapbox.com/static/js/main.c0c682a5.js:1:560230
_createInitialChildren@https://osmcha.mapbox.com/static/js/main.c0c682a5.js:1:548973
mountComponent@https://osmcha.mapbox.com/static/js/main.c0c682a5.js:1:547187
mountComponent@https://osmcha.mapbox.com/static/js/main.c0c682a5.js:1:153731
mountChildren@https://osmcha.mapbox.com/static/js/main.c0c682a5.js:1:560230
_createInitialChildren@https://osmcha.mapbox.com/static/js/main.c0c682a5.js:1:548973
mountComponent@https://osmcha.mapbox.com/static/js/main.c0c682a5.js:1:547187
mountComponent@https://osmcha.mapbox.com/static/js/main.c0c682a5.js:1:153731
performInitialMount@https://osmcha.mapbox.com/static/js/main.c0c682a5.js:1:565607
mountComponent@https://osmcha.mapbox.com/static/js/main.c0c682a5.js:1:564490
mountComponent@https://osmcha.mapbox.com/static/js/main.c0c682a5.js:1:153731
performInitialMount@https://osmcha.mapbox.com/static/js/main.c0c682a5.js:1:565607
mountComponent@https://osmcha.mapbox.com/static/js/main.c0c682a5.js:1:564490
mountComponent@https://osmcha.mapbox.com/static/js/main.c0c682a5.js:1:153731
updateChildren@https://osmcha.mapbox.com/static/js/main.c0c682a5.js:1:562328
_reconcilerUpdateChildren@https://osmcha.mapbox.com/static/js/main.c0c682a5.js:1:559993
_updateChildren@https://osmcha.mapbox.com/static/js/main.c0c682a5.js:1:560739
updateChildren@https://osmcha.mapbox.com/static/js/main.c0c682a5.js:1:560637
_updateDOMChildren@https://osmcha.mapbox.com/static/js/main.c0c682a5.js:1:551365
updateComponent@https://osmcha.mapbox.com/static/js/main.c0c682a5.js:1:549571
receiveComponent@https://osmcha.mapbox.com/static/js/main.c0c682a5.js:1:549124
receiveComponent@https://osmcha.mapbox.com/static/js/main.c0c682a5.js:1:154125</pre></div>
<div class="b" style="left:1564px;top:384px;width:1px;height:451px;background:#fff;"></div>
<div class="b" style="left:1565px;top:384px;width:16px;height:451px;background:#f0f0f0;"></div>
<div class="b" style="left:1565px;top:401px;width:15px;height:109px;background:#cdcdcd;"></div>
<svg class="b" style="left:1568px;top:389px;" width="9" height="8" viewBox="0 0 9 8"><g transform="translate(0.5,0.5)"><path d="M0.7 5.9L4 2.4L7.3 5.9" fill="none" stroke="#505050" stroke-width="2.1"/></g></svg>
<svg class="b" style="left:1568px;top:824px;" width="9" height="8" viewBox="0 0 9 8"><g transform="translate(0.5,0)"><path d="M0.7 1.1L4 4.6L7.3 1.1" fill="none" stroke="#505050" stroke-width="2.1"/></g></svg>
<div class="b" style="left:0px;top:835px;width:1582px;height:1px;background:#e0e0e2;"></div>
<div class="b" style="left:0px;top:836px;width:1582px;height:27px;background:#fff;"></div>
<svg class="b" style="left:12px;top:843px;" width="13" height="12" viewBox="0 0 13 12"><path d="M1 1.5L5.8 6L1 10.5M6.5 1.5L11.3 6L6.5 10.5" fill="none" stroke="#b1b1b3" stroke-width="1.4"/></svg>
<div class="b" style="left:0px;top:0px;width:1582px;height:1px;background:#c58b56;"></div>
<div class="b" style="left:0px;top:863px;width:1582px;height:1px;background:#c58b56;"></div>
<div class="b" style="left:0px;top:0px;width:1px;height:864px;background:#c58b56;"></div>
<div class="b" style="left:1581px;top:0px;width:1px;height:864px;background:#c58b56;"></div>
</div>
</body></html>
